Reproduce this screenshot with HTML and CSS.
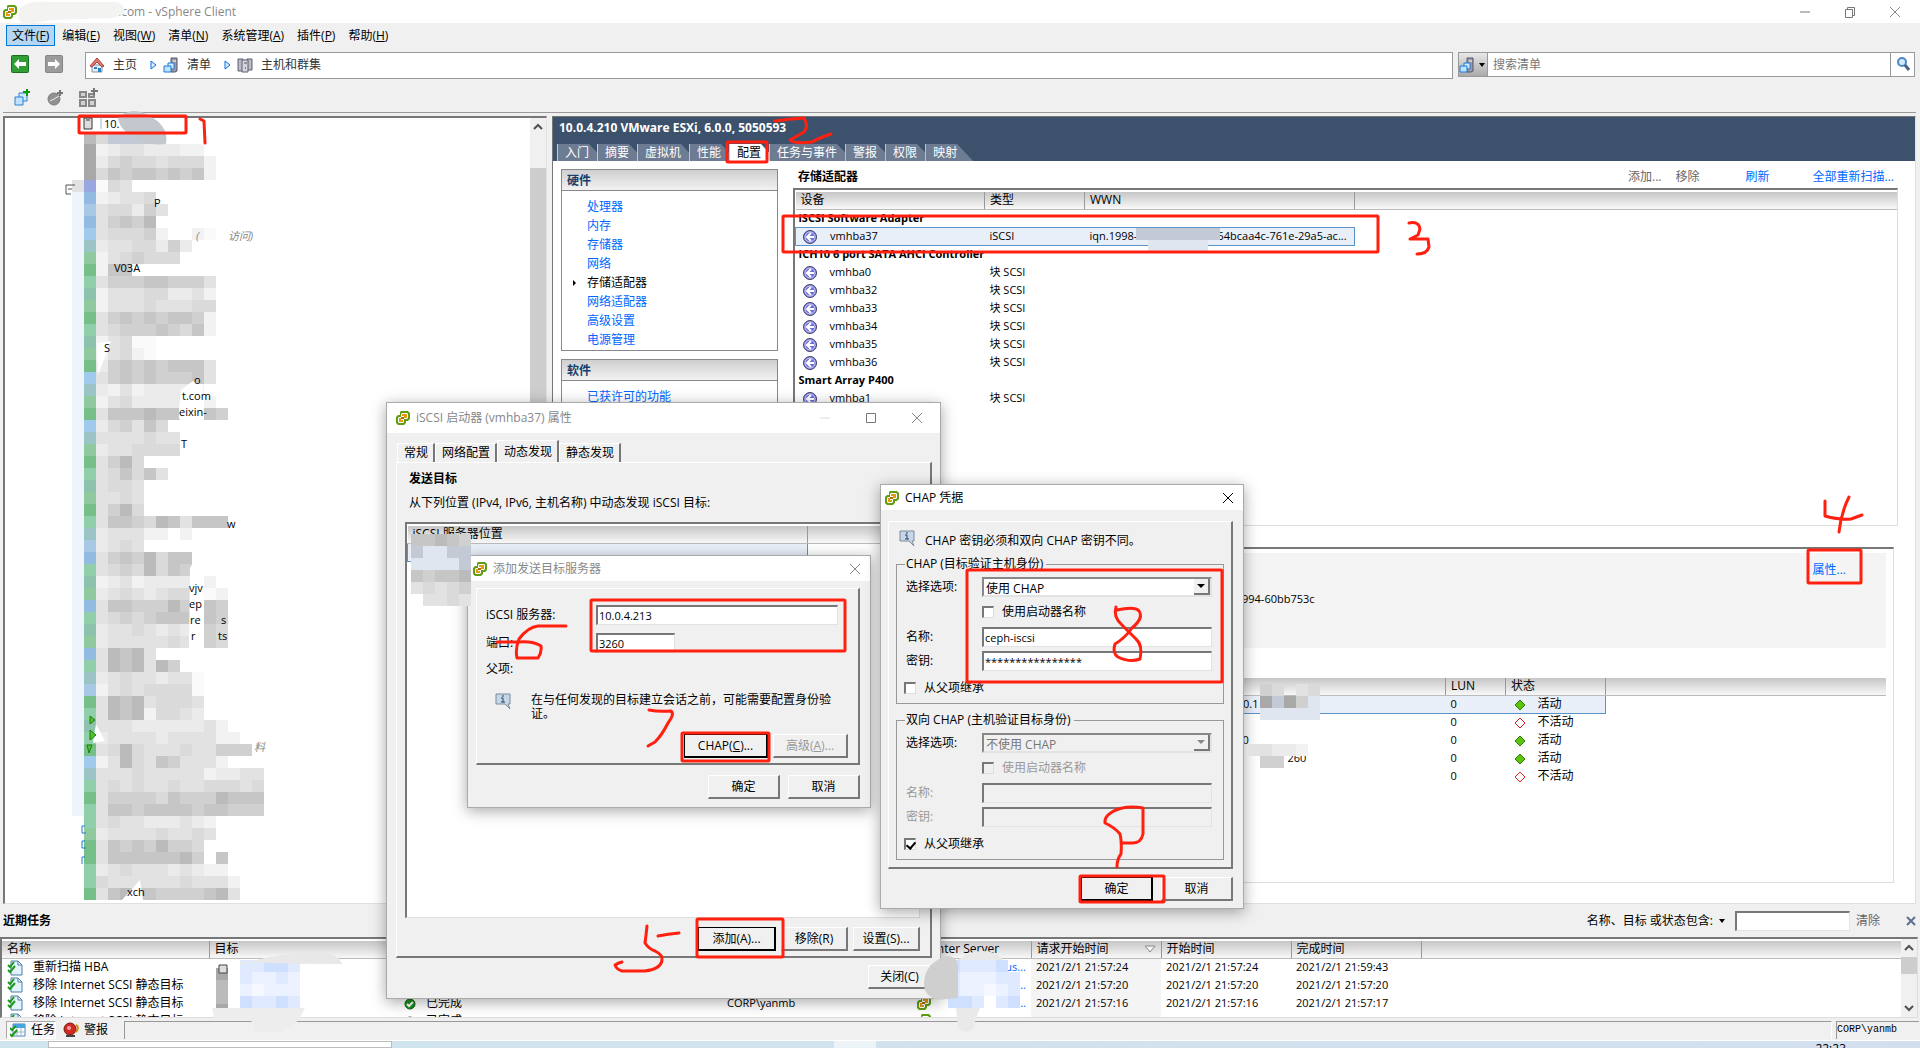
FILE: index.html
```html
<!DOCTYPE html>
<html lang="zh-CN">

<head>
    <meta charset="UTF-8">
    <meta name="viewport" content="width=device-width, initial-scale=1.0">
    <title>vSphere Client</title>
    <link rel="stylesheet" href="styles.css">
</head>

<body>
    <!-- shared icons -->
    <svg class="sprite">
        <symbol id="i-vs" viewBox="0 0 16 16">
            <path d="M6 1h7l2 2v6l-2 2h-2v2l-2 2H3l-2-2V7l2-2h2V2z" fill="#5f9e14" />
            <path d="M7 3h5l1 1v4l-1 1H9v3l-1 1H4l-1-1V8l1-1h2V4z" fill="#fff" />
            <path d="M7 4h5v4H9v-2H7zM4 8h2v2h2v2H4z" fill="#e59a12" />
            <path d="M6 7h3v2H6z" fill="#b06d00" />
        </symbol>
        <symbol id="i-hba" viewBox="0 0 16 16">
            <circle cx="8" cy="8" r="6.500" fill="#7f7fe0" stroke="#3c3f66" />
            <circle cx="8" cy="8" r="5" fill="#6d6fd6" stroke="#c9caf7" />
            <path d="M9 4L5 8l4 4M6 8h6" fill="none" stroke="#fff" stroke-width="2" />
        </symbol>
        <symbol id="i-info" viewBox="0 0 16 16">
            <path d="M1 1h14v10h-2l2 5-5-5H1z" fill="#c4d6ea" stroke="#7e8c9c" />
            <path d="M6 5h2v4M6 9h4M8 2v2" fill="none" stroke="#333f55" />
        </symbol>
        <symbol id="i-task" viewBox="0 0 16 16">
            <path d="M4 1h7l4 4v10H4z" fill="#e3f2fb" stroke="#4a7fa8" />
            <path d="M11 1v4h4z" fill="#fff" stroke="#4a7fa8" />
            <path d="M1 5l2 2 4-5M1 10l2 2 5-6" fill="none" stroke="#1b9a1b" stroke-width="2" />
        </symbol>
        <symbol id="i-host" viewBox="0 0 16 16">
            <path d="M8 1h6v13l-2 1H8z" fill="#9a9aa8" stroke="#55556b" />
            <path d="M10 4h3" stroke="#fff" />
            <path d="M5 6h6v6H5z" fill="#cfeaff" stroke="#1f78d0" />
            <path d="M1 9h7v6H1z" fill="#bfe3ff" stroke="#1f78d0" />
        </symbol>
        <symbol id="i-ok" viewBox="0 0 12 12">
            <circle cx="6" cy="6" r="5" fill="#17921f" stroke="#0c5e12" />
            <path d="M3 6l2 2 4-4" fill="none" stroke="#fff" stroke-width="2" />
        </symbol>
        <symbol id="i-on" viewBox="0 0 12 12">
            <path d="M6 1l5 5-5 5-5-5z" fill="#5cc40a" stroke="#2d7d0a" />
        </symbol>
        <symbol id="i-off" viewBox="0 0 12 12">
            <path d="M6 1l5 5-5 5-5-5z" fill="#fff" stroke="#e02020" />
        </symbol>
        <symbol id="i-x" viewBox="0 0 12 12">
            <path d="M1 1l10 10M11 1L1 11" fill="none" stroke="currentColor" />
        </symbol>
        <symbol id="i-up" viewBox="0 0 10 10">
            <path d="M1 7l4-4 4 4" fill="none" stroke="#505050" stroke-width="2" />
        </symbol>
        <symbol id="i-down" viewBox="0 0 10 10">
            <path d="M1 3l4 4 4-4" fill="none" stroke="#505050" stroke-width="2" />
        </symbol>
    </svg>

    <header class="titlebar">
        <svg class="icon"><use href="#i-vs" /></svg>
        <span class="app-name">.com - vSphere Client</span>
        <div class="win-btns">
            <button aria-label="最小化"><svg class="icon-s"><path d="M1 6h10" stroke="#777" /></svg></button>
            <button aria-label="还原"><svg class="icon-s"><path d="M1.500 3.500h7v8h-7zM3.500 3V1.500h7v8H9" fill="none" stroke="#777" /></svg></button>
            <button aria-label="关闭"><svg class="icon-s"><use href="#i-x" /></svg></button>
        </div>
    </header>

    <nav class="menubar">
        <button class="active">文件(<u>F</u>)</button>
        <button>编辑(<u>E</u>)</button>
        <button>视图(<u>W</u>)</button>
        <button>清单(<u>N</u>)</button>
        <button>系统管理(<u>A</u>)</button>
        <button>插件(<u>P</u>)</button>
        <button>帮助(<u>H</u>)</button>
    </nav>

    <div class="navbar">
        <button class="nav-btn" aria-label="后退">
            <svg width="18" height="18"><rect x=".5" y=".5" width="17" height="17" rx="1" fill="#2e9e35" stroke="#1e6b23" /><path d="M3 9l5-5v3h7v4H8v3z" fill="#fff" /></svg>
        </button>
        <button class="nav-btn" aria-label="前进">
            <svg width="18" height="18"><rect x=".5" y=".5" width="17" height="17" rx="1" fill="#9b9b9b" stroke="#858585" /><path d="M15 9l-5-5v3H3v4h7v3z" fill="#fff" /></svg>
        </button>
        <div class="crumbs">
            <svg class="icon"><path d="M3 8h10v7H3z" fill="#e8eef6" stroke="#7d93ad" /><path d="M1 9l7-8 7 8-2 1-5-5-5 5z" fill="#e0776f" stroke="#a8403a" /><path d="M5 10h3v2H5zM9 11h3v4H9z" fill="#2f7fc0" /></svg>
            <a href="#">主页</a>
            <svg class="sep"><path d="M1 1l5 4-5 4z" fill="#d8ecff" stroke="#0a70e0" /></svg>
            <svg class="icon"><use href="#i-host" /></svg>
            <a href="#">清单</a>
            <svg class="sep"><path d="M1 1l5 4-5 4z" fill="#d8ecff" stroke="#0a70e0" /></svg>
            <svg class="icon"><path d="M1 2h5v12H1zM10 2h5v11h-5z" fill="#b9bcc6" stroke="#5d6070" /><path d="M5 3h6v12H5z" fill="#d5d7de" stroke="#5d6070" /><path d="M7 6h3" stroke="#555" /><path d="M8 10h1v2H8z" fill="#2bc02b" /></svg>
            <a href="#">主机和群集</a>
        </div>
        <div class="search">
            <button class="search-type" aria-label="搜索类型">
                <svg class="icon"><use href="#i-host" /></svg>
                <svg width="6" height="4"><path d="M0 0h6L3 4z" /></svg>
            </button>
            <input type="text" placeholder="搜索清单" aria-label="搜索清单">
            <button class="search-go" aria-label="搜索">
                <svg class="icon"><circle cx="7" cy="6" r="4" fill="#cfeaff" stroke="#4d88c4" stroke-width="2" /><path d="M10 9l4 5" stroke="#48608a" stroke-width="3" /></svg>
            </button>
        </div>
    </div>

    <div class="toolbar">
        <button aria-label="新建虚拟机"><svg width="18" height="18"><path d="M6 4h8v8H6z" fill="#cfeaff" stroke="#2a80d4" /><path d="M2 8h8v8H2z" fill="#bfe3ff" stroke="#2a80d4" /><path d="M14 0v7M10 3h7" stroke="#0a9a0a" stroke-width="2" /></svg></button>
        <button aria-label="新建资源池"><svg width="18" height="18"><circle cx="8" cy="10" r="6" fill="#909090" stroke="#7c7c7c" /><path d="M4 12l4-2 5-3" stroke="#eee" fill="none" /><path d="M14 1v6M11 4h6" stroke="#777" stroke-width="2" /></svg></button>
        <button aria-label="新建 vApp"><svg width="20" height="20"><path d="M1 4h6v5H1zM1 12h6v6H1zM10 12h6v6h-6zM10 6h5v3h-5z" fill="#d2d2d2" stroke="#888" stroke-width="2" /><path d="M15 0v7M12 3h7" stroke="#777" stroke-width="2" /></svg></button>
    </div>

    <main class="main">
        <section class="tree">
            <div class="scroll">
                <svg class="arrow"><use href="#i-up" /></svg>
                <div class="thumb tree-thumb"></div>
            </div>
        </section>

        <section class="content">
            <div class="host-head">
                <h1>10.0.4.210 VMware ESXi, 6.0.0, 5050593</h1>
                <div class="tabs">
                    <button>入门</button>
                    <button>摘要</button>
                    <button>虚拟机</button>
                    <button>性能</button>
                    <button class="on">配置</button>
                    <button>任务与事件</button>
                    <button>警报</button>
                    <button>权限</button>
                    <button>映射</button>
                </div>
            </div>
            <div class="config">
                <aside class="side">
                    <div class="box">
                        <h2>硬件</h2>
                        <ul>
                            <li><a href="#">处理器</a></li>
                            <li><a href="#">内存</a></li>
                            <li><a href="#">存储器</a></li>
                            <li><a href="#">网络</a></li>
                            <li class="current"><a href="#">存储适配器</a></li>
                            <li><a href="#">网络适配器</a></li>
                            <li><a href="#">高级设置</a></li>
                            <li><a href="#">电源管理</a></li>
                        </ul>
                    </div>
                    <div class="box">
                        <h2>软件</h2>
                        <ul>
                            <li><a href="#">已获许可的功能</a></li>
                        </ul>
                    </div>
                </aside>
                <div class="detail">
                    <div class="detail-head">
                        <h3>存储适配器</h3>
                        <span class="off">添加...</span>
                        <span class="off">移除</span>
                        <a href="#">刷新</a>
                        <a href="#">全部重新扫描...</a>
                    </div>
                    <div class="adapters">
                        <table>
                            <colgroup><col class="c-dev"><col class="c-type"><col class="c-wwn"><col></colgroup>
                            <thead>
                                <tr><th>设备</th><th>类型</th><th>WWN</th><th></th></tr>
                            </thead>
                            <tbody>
                                <tr class="group"><td colspan="4">iSCSI Software Adapter</td></tr>
                                <tr class="sel"><td><svg class="icon"><use href="#i-hba" /></svg>vmhba37</td><td>iSCSI</td><td class="wwn"><span>iqn.1998-</span><span>54bcaa4c-761e-29a5-ac...</span></td><td></td></tr>
                                <tr class="group"><td colspan="4">ICH10 6 port SATA AHCI Controller</td></tr>
                                <tr><td><svg class="icon"><use href="#i-hba" /></svg>vmhba0</td><td>块 SCSI</td><td></td><td></td></tr>
                                <tr><td><svg class="icon"><use href="#i-hba" /></svg>vmhba32</td><td>块 SCSI</td><td></td><td></td></tr>
                                <tr><td><svg class="icon"><use href="#i-hba" /></svg>vmhba33</td><td>块 SCSI</td><td></td><td></td></tr>
                                <tr><td><svg class="icon"><use href="#i-hba" /></svg>vmhba34</td><td>块 SCSI</td><td></td><td></td></tr>
                                <tr><td><svg class="icon"><use href="#i-hba" /></svg>vmhba35</td><td>块 SCSI</td><td></td><td></td></tr>
                                <tr><td><svg class="icon"><use href="#i-hba" /></svg>vmhba36</td><td>块 SCSI</td><td></td><td></td></tr>
                                <tr class="group"><td colspan="4">Smart Array P400</td></tr>
                                <tr><td><svg class="icon"><use href="#i-hba" /></svg>vmhba1</td><td>块 SCSI</td><td></td><td></td></tr>
                            </tbody>
                        </table>
                    </div>
                    <div class="paths">
                        <div class="summary">
                            <a href="#">属性...</a>
                            <p>994-60bb753c</p>
                        </div>
                        <table>
                            <colgroup><col class="c-target"><col class="c-lun"><col class="c-state"><col></colgroup>
                            <thead>
                                <tr><th></th><th>LUN</th><th>状态</th><th></th></tr>
                            </thead>
                            <tbody>
                                <tr class="sel"><td>0.1</td><td>0</td><td><svg class="icon-s"><use href="#i-on" /></svg>活动</td><td></td></tr>
                                <tr><td></td><td>0</td><td><svg class="icon-s"><use href="#i-off" /></svg>不活动</td><td></td></tr>
                                <tr><td>0</td><td>0</td><td><svg class="icon-s"><use href="#i-on" /></svg>活动</td><td></td></tr>
                                <tr><td class="port">260</td><td>0</td><td><svg class="icon-s"><use href="#i-on" /></svg>活动</td><td></td></tr>
                                <tr><td></td><td>0</td><td><svg class="icon-s"><use href="#i-off" /></svg>不活动</td><td></td></tr>
                            </tbody>
                        </table>
                    </div>
                </div>
            </div>
        </section>
    </main>

    <section class="recent">
        <div class="recent-head">
            <h2>近期任务</h2>
            <label for="filter">名称、目标 或状态包含:</label>
            <svg width="6" height="4"><path d="M0 0h6L3 4z" /></svg>
            <input type="text" id="filter">
            <span class="off">清除</span>
            <button aria-label="关闭近期任务"><svg class="icon-s"><path d="M2 2l8 8M10 2l-8 8" stroke="#5d6f92" stroke-width="2" /></svg></button>
        </div>
        <div class="tasks">
            <div class="task-list">
                <table>
                    <colgroup><col class="t-name"><col class="t-target"><col class="t-status"><col class="t-user"><col class="t-vc"><col class="t-time"><col class="t-time"><col class="t-time"><col></colgroup>
                    <thead>
                        <tr><th>名称</th><th>目标</th><th>状态</th><th>启动者</th><th>vCenter Server</th><th>请求开始时间<svg class="sort"><path d="M0 1h10L5 7z" fill="#f4f4f4" stroke="#888" /></svg></th><th>开始时间</th><th>完成时间</th><th></th></tr>
                    </thead>
                    <tbody>
                        <tr><td><svg class="icon"><use href="#i-task" /></svg>重新扫描 HBA</td><td></td><td><svg class="icon-s"><use href="#i-ok" /></svg>已完成</td><td>CORP\yanmb</td><td class="vc"><a href="#">us...</a></td><td class="sorted">2021/2/1 21:57:24</td><td>2021/2/1 21:57:24</td><td>2021/2/1 21:59:43</td><td></td></tr>
                        <tr><td><svg class="icon"><use href="#i-task" /></svg>移除 Internet SCSI 静态目标</td><td></td><td><svg class="icon-s"><use href="#i-ok" /></svg>已完成</td><td>CORP\yanmb</td><td class="vc"><a href="#">s...</a></td><td class="sorted">2021/2/1 21:57:20</td><td>2021/2/1 21:57:20</td><td>2021/2/1 21:57:20</td><td></td></tr>
                        <tr><td><svg class="icon"><use href="#i-task" /></svg>移除 Internet SCSI 静态目标</td><td></td><td><svg class="icon-s"><use href="#i-ok" /></svg>已完成</td><td>CORP\yanmb</td><td class="vc"><svg class="icon"><use href="#i-vs" /></svg><a href="#">s...</a></td><td class="sorted">2021/2/1 21:57:16</td><td>2021/2/1 21:57:16</td><td>2021/2/1 21:57:17</td><td></td></tr>
                        <tr><td><svg class="icon"><use href="#i-task" /></svg>移除 Internet SCSI 静态目标</td><td></td><td><svg class="icon-s"><use href="#i-ok" /></svg>已完成</td><td>CORP\yanmb</td><td class="vc"><svg class="icon"><use href="#i-vs" /></svg></td><td class="sorted">2021/2/1 21:57:14</td><td>2021/2/1 21:57:14</td><td>2021/2/1 21:57:15</td><td></td></tr>
                    </tbody>
                </table>
            </div>
            <div class="scroll">
                <svg class="arrow"><use href="#i-up" /></svg>
                <div class="thumb"></div>
                <svg class="arrow"><use href="#i-down" /></svg>
            </div>
        </div>
    </section>

    <footer class="status">
        <button class="pressed"><svg class="icon"><path d="M3 2h12v12H3z" fill="#fff" stroke="#4a86b8" /><path d="M3 2h12v4H3z" fill="#4aa5e0" /><path d="M7 6v8M11 6v8M3 10h12" stroke="#9bb8cf" /><path d="M0 6l2 2 4-4M0 12l2 2 5-6" fill="none" stroke="#1b9a1b" stroke-width="2" /></svg>任务</button>
        <button><svg class="icon"><circle cx="7" cy="7" r="6" fill="#d02a24" stroke="#7d1511" /><circle cx="6" cy="6" r="2" fill="#f8a39f" /><path d="M3 13h9v2H3z" fill="#444" /><path d="M13 3c3 1 2 5 0 7" fill="none" stroke="#d09020" stroke-width="2" /></svg>警报</button>
        <div class="status-text"></div>
        <div class="user">CORP\yanmb</div>
    </footer>
    <div class="taskbar">
        <div class="task-a"></div>
        <div class="task-b"></div>
        <span class="clock">22:23</span>
    </div>

    <!-- iSCSI initiator properties -->
    <section class="dialog props">
        <div class="dlg-title">
            <svg class="icon"><use href="#i-vs" /></svg>
            <span>iSCSI 启动器 (vmhba37) 属性</span>
            <button aria-label="最小化" disabled><svg class="icon-s"><path d="M1 6h10" stroke="#ddd" /></svg></button>
            <button aria-label="最大化"><svg class="icon-s"><path d="M1.500 1.500h9v9h-9z" fill="none" stroke="#777" /></svg></button>
            <button aria-label="关闭"><svg class="icon-s"><use href="#i-x" /></svg></button>
        </div>
        <div class="dlg-tabs">
            <button>常规</button>
            <button>网络配置</button>
            <button class="on">动态发现</button>
            <button>静态发现</button>
        </div>
        <div class="panel props-panel">
            <h3>发送目标</h3>
            <p>从下列位置 (IPv4, IPv6, 主机名称) 中动态发现 iSCSI 目标:</p>
            <div class="servers">
                <table>
                    <colgroup><col class="c-server"><col></colgroup>
                    <thead><tr><th>iSCSI 服务器位置</th><th></th></tr></thead>
                    <tbody><tr class="sel"><td></td><td></td></tr></tbody>
                </table>
            </div>
            <div class="actions">
                <button class="btn default">添加(A)...</button>
                <button class="btn">移除(R)</button>
                <button class="btn">设置(S)...</button>
            </div>
        </div>
        <div class="actions close-row">
            <button class="btn">关闭(C)</button>
        </div>
    </section>

    <!-- add send target server -->
    <section class="dialog target">
        <div class="dlg-title">
            <svg class="icon"><use href="#i-vs" /></svg>
            <span>添加发送目标服务器</span>
            <button aria-label="关闭"><svg class="icon-s"><use href="#i-x" /></svg></button>
        </div>
        <div class="panel target-panel">
            <div class="form">
                <label for="server">iSCSI 服务器:</label>
                <input type="text" id="server" value="10.0.4.213">
                <label for="port">端口:</label>
                <input type="text" id="port" class="short" value="3260">
                <span>父项:</span>
            </div>
            <div class="note">
                <svg class="icon"><use href="#i-info" /></svg>
                <p>在与任何发现的目标建立会话之前，可能需要配置身份验证。</p>
            </div>
            <div class="actions">
                <button class="btn default">CHAP(<u>C</u>)...</button>
                <button class="btn" disabled>高级(<u>A</u>)...</button>
            </div>
        </div>
        <div class="actions">
            <button class="btn">确定</button>
            <button class="btn">取消</button>
        </div>
    </section>

    <!-- CHAP credentials -->
    <section class="dialog chap">
        <div class="dlg-title">
            <svg class="icon"><use href="#i-vs" /></svg>
            <span>CHAP 凭据</span>
            <button aria-label="关闭"><svg class="icon-s"><use href="#i-x" /></svg></button>
        </div>
        <div class="panel chap-panel">
            <div class="note">
                <svg class="icon"><use href="#i-info" /></svg>
                <p>CHAP 密钥必须和双向 CHAP 密钥不同。</p>
            </div>
            <fieldset>
                <legend>CHAP (目标验证主机身份)</legend>
                <div class="form">
                    <label for="opt1">选择选项:</label>
                    <div class="combo">
                        <select id="opt1"><option>使用 CHAP</option></select>
                        <span class="drop"><svg width="8" height="4"><path d="M0 0h8L4 4z" /></svg></span>
                    </div>
                    <label class="check indent"><input type="checkbox">使用启动器名称</label>
                    <label for="name1">名称:</label>
                    <input type="text" id="name1" value="ceph-iscsi">
                    <label for="key1">密钥:</label>
                    <input type="text" id="key1" value="****************">
                </div>
                <label class="check"><input type="checkbox">从父项继承</label>
            </fieldset>
            <fieldset class="mutual">
                <legend>双向 CHAP (主机验证目标身份)</legend>
                <div class="form">
                    <label for="opt2">选择选项:</label>
                    <div class="combo">
                        <select id="opt2" disabled><option>不使用 CHAP</option></select>
                        <span class="drop"><svg width="8" height="4"><path d="M0 0h8L4 4z" fill="#888" /></svg></span>
                    </div>
                    <label class="check indent dim"><input type="checkbox" disabled>使用启动器名称</label>
                    <label for="name2" class="dim">名称:</label>
                    <input type="text" id="name2" disabled>
                    <label for="key2" class="dim">密钥:</label>
                    <input type="text" id="key2" disabled>
                </div>
                <label class="check"><input type="checkbox" checked>从父项继承</label>
            </fieldset>
        </div>
        <div class="actions">
            <button class="btn default">确定</button>
            <button class="btn">取消</button>
        </div>
    </section>

    <!-- blurred names and numbered steps -->
    <svg class="marks">
        <path d="M20 8q8-8 30-6h66q10 2 8 12l-12 4-60 2-25 4q-12 0-7-16z" fill="#f3f3f2" />
        <g id="mosaic"></g>
        <g class="scrap">
            <path d="M84 118h8v11h-8zM86 120h4" fill="#ddd" stroke="#333" />
            <path d="M101 117v12" stroke="#9db7d8" />
            <text x="104" y="128">10.</text>
            <path d="M118 118q15-14 35 0 16 10 13 26-20 2-28-6-18-6-20-20z" fill="#c3c8cf" />
            <text x="154" y="207">P</text>
            <text x="196" y="240" class="faint">(</text>
            <text x="228" y="240" class="faint">访问)</text>
            <text x="114" y="272">V03A</text>
            <path d="M66 185h9M66 185v9h5M68 189h4" fill="none" stroke="#555" />
            <path d="M97 343l14-2-13 34z" fill="#fff" />
            <text x="104" y="352">S</text>
            <path d="M179 410l2-20 12-9 10 4v34h-24z" fill="#fff" />
            <text x="194" y="384">o</text>
            <text x="182" y="400">t.com</text>
            <text x="179" y="416">eixin-</text>
            <text x="181" y="448">T</text>
            <text x="227" y="528">w</text>
            <path d="M190 568l9-16h5v20l-6 20-2 56h-7z" fill="#fff" />
            <text x="189" y="592">vjv</text>
            <text x="189" y="608">ep</text>
            <text x="190" y="624">re</text>
            <text x="221" y="624">s</text>
            <text x="191" y="640">r</text>
            <text x="218" y="640">ts</text>
            <text x="254" y="751" class="faint">料</text>
            <path d="M96 724l9 17-12 2z" fill="#fff" />
            <path d="M90 716l5 4-5 4zM90 730l6 5-6 5zM87 745h5l-3 8z" fill="#4fc32a" stroke="#1c7c14" />
            <path d="M85 826h-3v7h4M85 841h-3v7h4M85 857h-3v7" fill="none" stroke="#1f78d0" />
            <path d="M122 900l18-20 3 20z" fill="#fff" />
            <text x="127" y="896">xch</text>
            <path d="M219 965h8v8h-8z" fill="#ddd" stroke="#444" />
            <path d="M240 965q20-8 60-12 38-4 42 11-50 0-102 -2z" fill="#e8e8e8" />
            <path d="M212 1008h93l-6 12-18 12h-26l-4-12h-36z" fill="#ededed" />
            <path d="M924 984q0-20 22-28 12 0 12 12v30l-20 2q-14-4-14-16z" fill="#cfcfcf" />
            <path d="M957 960l16-8q22-4 30 8zM956 1008h24l-8 22q-8 4-14-2z" fill="#e9e9e9" />
        </g>
        <g class="red">
            <rect x="79" y="116" width="107" height="17" rx="1" />
            <path d="M200 119l4 2 1 22" />
            <rect x="727" y="142" width="40" height="20" rx="1" />
            <path d="M775 121q14-2 29-3 5 8 0 14l-14 8q4 4 22 2 7-4 19-8" />
            <rect x="783" y="216" width="595" height="36" rx="1" />
            <path d="M1409 223q10-2 11 6l-2 6-8 4h18l1 8q-2 7-12 7" />
            <rect x="1808" y="550" width="53" height="33" rx="1" />
            <path d="M1825 501v15q14 4 26 3l11-4M1849 497q-8 16-10 35" />
            <rect x="697" y="919" width="86" height="38" rx="1" />
            <path d="M647 926q-1 10-2 17 4 6 10 8 8 4 7 9-1 9-17 11h-23q-6-2-7-6 3-2 7-3M658 936q10-2 21-3" />
            <rect x="591" y="600" width="254" height="51" rx="1" />
            <path d="M566 626h-28q-10 1-19 13-4 10-2 19h21q4-6 3-12-8-5-22-4h-22" />
            <rect x="682" y="733" width="87" height="28" rx="1" />
            <path d="M649 710q10 2 22 1 4 3-3 12-6 12-13 19l-7 4" />
            <rect x="967" y="570" width="255" height="112" rx="1" />
            <path d="M1116 607q-3 10 6 18l14 14q7 6 4 20-10 4-22-2-6-4-3-13 10-6 17-16 12-10 7-17-4-5-22-1" />
            <rect x="1080" y="876" width="84" height="26" rx="1" />
            <path d="M1117 867q0-8 4-13 1-12-1-20-6-7-15-11-1-6 7-11 12-7 31-4v26q-2 9-10 9h-12" />
        </g>
    </svg>

    <script>
        // cell tones, "." leaves a cell empty
        var tones = {
            a: "#fafafa", b: "#f2f2f2", c: "#ebebeb", d: "#e2e2e2", e: "#dadada",
            f: "#d0d0d0", g: "#c6c6c6", h: "#bbbbbb", i: "#a8a8a8",
            G: "#76bf88", M: "#90cfa9", T: "#8dc3ad", N: "#91c99f", B: "#a0caec",
            S: "#9bc4c6", U: "#93bae0", L: "#a9c8e6", V: "#9aa6e0", p: "#eef4fb",
            q: "#c3cad6", r: "#dfe6ef", w: "#cfdfff", x: "#dfe9ff", y: "#ecf2ff", z: "#f5f8ff"
        };
        var svgNS = "http://www.w3.org/2000/svg";
        var mosaic = document.getElementById("mosaic");

        function drawCells(left, top, rows) {
            rows.forEach(function (row, r) {
                for (var c = 0; c < row.length; c++) {
                    if (row[c] == ".") continue;
                    var cell = document.createElementNS(svgNS, "rect");
                    cell.setAttribute("x", left + c * 12);
                    cell.setAttribute("y", top + r * 12);
                    cell.setAttribute("width", 12);
                    cell.setAttribute("height", 12);
                    cell.setAttribute("fill", tones[row[c]]);
                    mosaic.appendChild(cell);
                }
            });
        }

        // inventory tree
        drawCells(72, 132, [
            ".heqqqq", ".ibcddcccbb", ".icefeedeeeb", ".iegfggfgfgb",
            "dVaed", "pUbcdde", "pLdeecfd", "pUdfgfh", "pBdeeefb..ba", "pScddeecfc",
            "pNbdefeee", "pGbgg", "pMdfffggfffd", "pTbdddeeccdb", "pNbdddedddee",
            "pGdfgfgfggfb", "pMdefffgfegb", "pTbdeaa", "pNbdeba", "pGcfgfgfgggd",
            "pBdfgfgfffgd", "pScbdbccccb", "pNbdecccc..b", "pGdggghgg..gf", "pBcefdge",
            "pSddddedd", "pNcddeeee", "pGdfhe", "pMdegegd", "pTdeed",
            "pNdded", "pGdfhe", "pMdggfehgdggg", "pScdddbb.b", "pLcded",
            "pUdfgfhegg", "pMdefehegf", "pTbcdbcccc.b", "pNcdedcdee.ab",
            "pUdggfffhf.gf", "pMdefefggg.gf", "pTcddedcdc.fe", "pNcddddded.fe", "pUdhghd",
            "pMdhghdhf", "pScdeddcdda", "pLbdedeeeea", "pGdhghdeeed", "pMdhghbeedc",
            "pTdddccccccdb", "pMcddddcddddbb", "pGdehedddeddfff", "pBbdhedgfdddb", "pSdddedddddbccdd",
            "pMdededdeddeeede", "pGdffffegfffhggg", "pMdggfggggfggfff", ".Mdeddcccdcb", ".Ncddddedded",
            ".Gdgfgfhffe", ".Gdgggggghf.g", ".Mcdedddcdcbb", ".Meddddddedddb", ".Gdghggffffghd"
        ]);
        // adapter WWN
        drawCells(1136, 228, ["qqqqqqq", ".rrrrr."]);
        // path targets
        drawCells(1260, 684, ["fe.de", "iqifr", "rrrrr"]);
        drawCells(1248, 744, ["ddccb", ".ff"]);
        // server list
        drawCells(411, 534, ["gghgf", "qrrqq", "rrrrq", "gfggh", "dedef", ".dded"]);
        // recent tasks
        drawCells(240, 960, ["xxwwx", "xyyxy", "yzyyy", "wxxwx"]);
        drawCells(216, 968, ["i", "h", "h", "i"]);
        drawCells(948, 960, ["wxxxw", "xyyyxx", "xyyzyx", "wwx.xw"]);
    </script>
</body>

</html>
```
FILE: styles.css
```css
* {
    box-sizing: border-box;
}

body {
    margin: 0;
    height: 100vh;
    display: flex;
    flex-direction: column;
    position: relative;
    overflow: hidden;
    background: #f0f0f0;
    color: #000;
    font-family: "Open Sans", "Noto Sans CJK SC", sans-serif;
    font-size: 12px;
    line-height: 16px;
}

h1, h2, h3, p, ul {
    margin: 0;
    padding: 0;
    font-size: 12px;
}

button, input, select {
    font: inherit;
    color: inherit;
    padding: 0;
    margin: 0;
    border: 0;
    background: none;
}

a {
    color: #0066ff;
    text-decoration: none;
}

table {
    width: 100%;
    table-layout: fixed;
    border-collapse: collapse;
    font-size: 11px;
}

th {
    height: 18px;
    padding: 0 5px;
    text-align: left;
    font-weight: normal;
    font-size: 12px;
    line-height: 14px;
    background: linear-gradient(#c6c6c6, #f8f8f8);
    border-top: 2px solid #fff;
    border-right: 1px solid #999;
    border-bottom: 1px solid #bbb;
    white-space: nowrap;
}

th:last-child {
    border-right: 0;
}

td {
    height: 18px;
    padding: 0 5px;
    line-height: 16px;
    white-space: nowrap;
    overflow: hidden;
}

td svg {
    vertical-align: middle;
}

.sprite {
    display: none;
}

.icon {
    width: 16px;
    height: 16px;
    flex: none;
}

.icon-s {
    width: 12px;
    height: 12px;
    flex: none;
}

.off {
    color: #666;
}

/* window frame */
.titlebar {
    display: flex;
    align-items: center;
    height: 23px;
    padding-left: 2px;
    background: #fff;
    color: #888;
}

.app-name {
    padding-left: 100px;
}

.win-btns {
    margin-left: auto;
    padding-right: 19px;
    display: flex;
    gap: 33px;
}

.win-btns button {
    display: flex;
}

.menubar {
    display: flex;
    gap: 1px;
    height: 25px;
    padding: 2px 6px;
}

.menubar button {
    height: 21px;
    padding: 0 5px;
    border: 1px solid transparent;
}

.menubar .active {
    background: #b5d7f3;
    border-color: #0078d7;
}

.navbar {
    display: flex;
    align-items: flex-start;
    height: 35px;
    padding: 4px 5px 0 11px;
}

.nav-btn {
    display: flex;
    width: 34px;
    padding-top: 3px;
}

.crumbs {
    flex: 1;
    display: flex;
    align-items: center;
    gap: 8px;
    height: 27px;
    margin: 0 5px 0 6px;
    padding: 0 3px 2px;
    background: #fff;
    border: 1px solid #999;
}

.crumbs a {
    color: #333;
}

.sep {
    width: 7px;
    height: 10px;
    margin: 0 -2px 0 5px;
}

.search {
    display: flex;
    width: 457px;
    height: 25px;
    background: #fff;
    border: 1px solid #999;
}

.search-type {
    display: flex;
    align-items: center;
    gap: 4px;
    width: 29px;
    background: linear-gradient(#e8e8e8, #aaa);
    border-right: 1px solid #999;
}

.search input {
    flex: 1;
    padding: 0 5px;
}

.search input::placeholder {
    color: #777;
}

.search-go {
    width: 24px;
    padding-top: 3px;
    border-left: 1px solid #999;
}

.toolbar {
    display: flex;
    align-items: center;
    gap: 15px;
    height: 30px;
    margin: 0 4px 3px 3px;
    padding-left: 10px;
    border-bottom: 1px solid #999;
}

.toolbar button {
    display: flex;
}

/* panes */
.main {
    flex: 1;
    min-height: 0;
    display: flex;
    gap: 5px;
    padding: 0 4px 0 3px;
}

.tree {
    width: 544px;
    display: flex;
    justify-content: flex-end;
    background: #fff;
    border: 1px solid #e0e0e0;
    border-top: 2px solid #777;
    border-left: 2px solid #777;
}

.scroll {
    width: 16px;
    flex: none;
    display: flex;
    flex-direction: column;
    align-items: center;
    background: #f0f0f0;
}

.arrow {
    width: 10px;
    height: 10px;
    margin: 4px 0;
}

.thumb {
    width: 100%;
    height: 17px;
    margin-bottom: auto;
    background: #cdcdcd;
}

.tree-thumb {
    flex: 1;
    margin-top: 32px;
    margin-bottom: 0;
}

.content {
    flex: 1;
    min-width: 0;
    display: flex;
    flex-direction: column;
    background: #fff;
    border: 1px solid #e0e0e0;
    border-top: 1px solid #777;
    border-left: 1px solid #777;
}

.host-head {
    height: 44px;
    flex: none;
    padding: 3px 4px 0;
    background: #3c516b;
    color: #fff;
}

.host-head h1 {
    padding-left: 2px;
    font-size: 12px;
    line-height: 16px;
}

.tabs {
    display: flex;
    padding-top: 8px;
}

.tabs button {
    height: 17px;
    margin-right: -8px;
    padding: 0 16px 0 7px;
    line-height: 16px;
    background: #6d7c93;
    border-left: 1px solid #c5ccd6;
    clip-path: polygon(0 0, calc(100% - 16px) 0, 100% 100%, 0 100%);
}

.tabs .on {
    background: #fff;
    color: #000;
}

.config {
    flex: 1;
    min-height: 0;
    display: flex;
    gap: 15px;
    padding: 8px 17px 20px 8px;
}

.side {
    width: 217px;
    flex: none;
}

.box {
    margin-bottom: 8px;
    border: 1px solid #888;
}

.box h2 {
    height: 21px;
    padding-left: 5px;
    line-height: 21px;
    color: #163e6c;
    background: linear-gradient(#cfcfcf, #f2f2f2);
    border-bottom: 1px solid #888;
}

.box ul {
    padding: 6px 0 1px 25px;
    list-style: none;
}

.box li {
    line-height: 19px;
}

.box .current {
    display: flex;
    align-items: center;
    gap: 11px;
    margin-left: -14px;
}

.box .current::before {
    content: "";
    border: 3px solid transparent;
    border-left-color: #000;
    border-right: 0;
}

.box .current a {
    color: #000;
}

.detail {
    flex: 1;
    min-width: 0;
    display: flex;
    flex-direction: column;
}

.detail-head {
    display: flex;
    align-items: center;
    height: 19px;
    flex: none;
    padding: 0 4px 3px 5px;
}

.detail-head h3 {
    flex: 1;
}

.detail-head span {
    margin-right: 14px;
}

.detail-head a {
    margin-left: 32px;
}

.detail-head a + a {
    margin-left: 43px;
}

.adapters {
    height: 338px;
    flex: none;
    border: 1px solid #ddd;
    border-top: 2px solid #777;
    border-left: 2px solid #777;
}

.c-dev {
    width: 189px;
}

.c-type {
    width: 100px;
}

.c-wwn {
    width: 270px;
}

.adapters td:first-child .icon {
    margin: 0 12px 0 3px;
}

.adapters tr td:first-child {
    padding-left: 3px;
}

.group td {
    font-weight: bold;
}

.wwn span:first-child {
    display: inline-block;
    width: 128px;
}

.sel td {
    background: #e9eff8;
    border-top: 1px solid #5a93c8;
    border-bottom: 1px solid #5a93c8;
}

.sel td:nth-last-child(2) {
    border-right: 1px solid #5a93c8;
}

.sel td:first-child {
    border-left: 1px solid #5a93c8;
}

.sel td:last-child {
    background: #fff;
    border: 0;
}

.paths {
    flex: 1;
    margin: 21px 4px 0 0;
    padding: 4px 7px 0;
    border: 1px solid #ddd;
    border-top: 2px solid #777;
    border-left: 2px solid #777;
}

.summary {
    height: 95px;
    margin-bottom: 28px;
    padding: 9px 40px 0 440px;
    background: #f4f4f4;
}

.summary a {
    display: block;
    text-align: right;
}

.summary p {
    padding-top: 13px;
    font-size: 11px;
}

.paths table {
    border-top: 1px solid #999;
}

.c-target {
    width: 643px;
}

.c-lun {
    width: 60px;
}

.c-state {
    width: 100px;
}

.paths td:first-child {
    padding-left: 440px;
}

.paths td.port {
    padding-left: 485px;
}

.paths td:nth-child(3) {
    font-size: 12px;
}

.paths td .icon-s {
    margin: 0 12px 0 3px;
}

/* recent tasks */
.recent-head {
    display: flex;
    align-items: center;
    gap: 6px;
    height: 33px;
    padding: 0 3px;
}

.recent-head h2 {
    flex: 1;
}

.recent-head input {
    width: 115px;
    height: 20px;
    margin: 0 0 0 4px;
}

.recent-head button {
    display: flex;
    margin-left: 19px;
}

input[type="text"] {
    border-style: solid;
    border-width: 2px 1px 1px 2px;
    border-color: #777 #e3e3e3 #e3e3e3 #777;
    background: #fff;
}

.search input[type="text"] {
    border: 0;
}

.tasks {
    display: flex;
    height: 81px;
    margin-right: 2px;
    overflow: hidden;
    background: #fff;
    border: 1px solid #ddd;
    border-top: 2px solid #777;
    border-left: 2px solid #777;
}

.task-list {
    flex: 1;
    min-width: 0;
    overflow: hidden;
}

.tasks td:first-child,
.tasks td:nth-child(3) {
    font-size: 12px;
}

.t-name {
    width: 207px;
}

.t-target {
    width: 190px;
}

.t-status {
    width: 323px;
}

.t-user {
    width: 189px;
}

.t-vc {
    width: 120px;
}

.t-time {
    width: 130px;
}

.tasks td .icon {
    margin-right: 10px;
}

.tasks td .icon-s {
    margin-right: 10px;
}

.tasks td.vc {
    text-align: right;
}

.vc .icon {
    float: left;
}

.sorted {
    background: #f4f4f4;
}

.sort {
    float: right;
    width: 11px;
    height: 8px;
    margin-top: 3px;
}

.status {
    display: flex;
    gap: 4px;
    height: 22px;
    padding: 3px 1px 1px 6px;
}

.status button {
    display: flex;
    align-items: center;
    gap: 5px;
    width: 50px;
    padding-left: 3px;
    white-space: nowrap;
}

.status button + button {
    width: 60px;
}

.status .pressed {
    background: #f8f8f8;
    border: 1px solid #aaa;
    border-right-color: #fff;
    border-bottom-color: #fff;
}

.status-text {
    flex: 1;
    border-top: 1px solid #999;
    border-left: 1px solid #999;
    border-right: 1px solid #fff;
}

.user {
    width: 83px;
    border-top: 1px solid #999;
    border-left: 1px solid #999;
    font-family: "Liberation Mono", monospace;
    font-size: 10px;
}

.taskbar {
    display: flex;
    height: 8px;
    overflow: hidden;
    background: linear-gradient(90deg, #cfe5ed, #d3dfef);
    border-top: 1px solid #fff;
}

.task-a {
    width: 344px;
    margin-left: 48px;
    background: #fff;
    border: 1px solid #bbb;
}

.task-b {
    width: 42px;
    margin-left: 442px;
    background: #edf4f8;
}

.clock {
    margin-left: auto;
    padding-right: 74px;
}

/* dialogs */
.dialog {
    position: absolute;
    display: flex;
    flex-direction: column;
    background: #f0f0f0;
    border: 1px solid #aaa;
    box-shadow: 0 3px 14px rgba(0, 0, 0, 0.35);
}

.dlg-title {
    display: flex;
    align-items: center;
    gap: 5px;
    height: 30px;
    flex: none;
    padding: 0 17px 0 8px;
    background: #fff;
    color: #888;
}

.dlg-title span {
    flex: 1;
}

.dlg-title button {
    display: flex;
    margin-left: 29px;
}

.panel {
    display: flex;
    flex-direction: column;
    border-style: solid;
    border-width: 1px 2px 2px 1px;
    border-color: #fff #777 #777 #fff;
}

.actions {
    display: flex;
    justify-content: flex-end;
    gap: 8px;
}

.btn {
    width: 72px;
    height: 24px;
    line-height: 20px;
    border-style: solid;
    border-width: 1px 2px 2px 1px;
    border-color: #fff #777 #777 #fff;
    background: #f0f0f0;
    white-space: nowrap;
}

.btn.default {
    border-color: #000;
}

.btn:disabled {
    color: #999;
}

.props {
    left: 386px;
    top: 402px;
    width: 555px;
    height: 597px;
}

.dlg-tabs {
    display: flex;
    align-items: flex-end;
    height: 29px;
    margin: 0 10px;
}

.dlg-tabs button {
    height: 19px;
    padding: 0 5px 0 6px;
    border: 1px solid #fff;
    border-right: 2px solid #777;
    border-bottom: 0;
}

.dlg-tabs .on {
    height: 22px;
    background: #f0f0f0;
}

.props-panel {
    flex: 1;
    margin: 0 8px 0 9px;
    padding: 8px 10px 5px 8px;
}

.props-panel h3,
.props-panel p {
    padding: 0 0 8px 4px;
}

.servers {
    flex: 1;
    margin-top: 3px;
    background: #fff;
    border: 1px solid #ddd;
    border-top: 2px solid #777;
    border-left: 2px solid #777;
}

.c-server {
    width: 400px;
}

.props-panel .actions {
    gap: 5px;
    padding-top: 9px;
}

.props-panel .btn {
    width: 67px;
}

.props-panel .default {
    width: 78px;
}

.close-row {
    padding: 7px 8px 9px;
}

.close-row .btn {
    width: 64px;
}

.target {
    left: 467px;
    top: 555px;
    width: 404px;
    height: 253px;
}

.target .dlg-title {
    height: 25px;
    padding: 0 9px 0 4px;
}

.target-panel {
    height: 177px;
    margin: 7px 10px 10px 8px;
    padding: 16px 10px 5px 9px;
}

.target-panel .form {
    grid-template-columns: 110px 1fr;
    padding-right: 10px;
}

.form {
    display: grid;
    align-items: center;
    row-gap: 8px;
}

.form input[type="text"] {
    height: 20px;
    padding: 0 1px;
    font-size: 11px;
}

.form .short {
    width: 79px;
}

.note {
    display: flex;
    gap: 10px;
}

.target-panel .note {
    gap: 20px;
    padding: 16px 10px 0 9px;
}

.target-panel .note p {
    line-height: 14px;
}

.target-panel .actions {
    margin-top: auto;
    gap: 5px;
}

.target-panel .btn {
    width: 75px;
}

.target-panel .default {
    width: 84px;
}

.target > .actions {
    margin-right: 10px;
}

.chap {
    left: 880px;
    top: 484px;
    width: 364px;
    height: 425px;
}

.chap .dlg-title {
    height: 25px;
    padding: 0 9px 0 3px;
    color: #000;
}

.chap-panel {
    height: 348px;
    margin: 11px 10px 8px 7px;
    padding: 8px 7px 6px;
}

.chap-panel .note {
    padding: 0 0 7px 3px;
}

.chap-panel .note p {
    padding-top: 3px;
}

fieldset {
    margin: 0 0 8px;
    padding: 5px 11px 5px 7px;
    border: 1px solid #999;
    min-width: 0;
}

fieldset.mutual {
    margin: 0;
}

legend {
    margin-left: 1px;
    padding: 0 3px 0 1px;
    line-height: 16px;
}

fieldset .form {
    grid-template-columns: 76px 1fr;
    row-gap: 4px;
    padding-left: 2px;
    line-height: 20px;
}

.combo {
    position: relative;
}

.combo select {
    display: block;
    width: 100%;
    height: 20px;
    padding: 0 2px;
    appearance: none;
    background: #fff;
    border: 2px solid #888;
    border-right-color: #e3e3e3;
    border-bottom-color: #e3e3e3;
}

.combo select:disabled,
input[type="text"]:disabled {
    background: #f0f0f0;
    color: #777;
    opacity: 1;
}

.drop {
    position: absolute;
    top: 2px;
    right: 2px;
    display: flex;
    align-items: center;
    justify-content: center;
    width: 16px;
    height: 16px;
    background: #f0f0f0;
    border-right: 2px solid #777;
    border-bottom: 2px solid #777;
    pointer-events: none;
}

.check {
    display: flex;
    align-items: center;
    gap: 8px;
    line-height: 20px;
}

.indent {
    grid-column: 2;
    line-height: 22px;
}

.dim {
    color: #999;
}

fieldset > .check {
    margin: 7px 0 0;
}

input[type="checkbox"] {
    display: grid;
    place-items: center;
    width: 12px;
    height: 12px;
    appearance: none;
    background: #fff;
    border-style: solid;
    border-width: 2px 1px 1px 2px;
    border-color: #777 #ddd #ddd #777;
}

input[type="checkbox"]:disabled {
    background: #f0f0f0;
}

input[type="checkbox"]:checked::before {
    content: "";
    width: 4px;
    height: 7px;
    border: solid #000;
    border-width: 0 2px 2px 0;
    transform: rotate(40deg);
}

.chap > .actions {
    margin-right: 10px;
}

/* numbered steps on top of everything */
.marks {
    position: absolute;
    top: 0;
    left: 0;
    width: 100%;
    height: 100%;
    pointer-events: none;
}

.scrap text {
    font-size: 11px;
}

.scrap .faint {
    font-style: italic;
    fill: #888;
}

.red {
    fill: none;
    stroke: #ff2010;
    stroke-width: 3;
    stroke-linecap: round;
    stroke-linejoin: round;
}
```
